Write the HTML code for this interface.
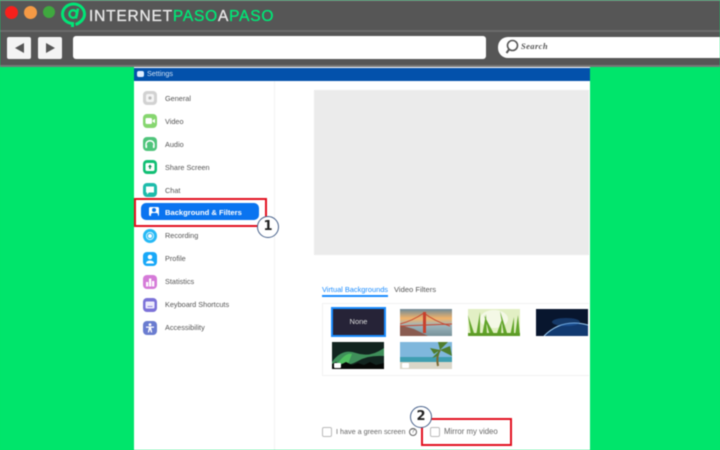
<!DOCTYPE html>
<html><head><meta charset="utf-8">
<style>
html,body{margin:0;padding:0;width:720px;height:450px;overflow:hidden;background:#00e56b;font-family:"Liberation Sans",sans-serif}
#w{position:absolute;left:0;top:0;width:720px;height:450px;overflow:hidden;background:#00e56b;filter:blur(.4px)}
.a{position:absolute}
svg{position:absolute;display:block}
.item{position:absolute;left:165px;font-size:7.3px;line-height:10px;color:#555;white-space:nowrap}
.ic{position:absolute;left:143px;width:14px;height:14px;border-radius:4px}
.ic svg{left:0;top:0}
.th{position:absolute;width:52px;height:27px;overflow:hidden}
</style></head><body><div id="w">
<div class="a" style="left:0;top:0;width:720px;height:66px;background:#565656"></div>
<div class="a" style="left:0;top:0;width:720px;height:1px;background:#888"></div>
<div class="a" style="left:0;top:30px;width:720px;height:2px;background:#6b6b6b"></div>
<div class="a" style="left:0;top:65px;width:720px;height:2px;background:#777"></div>

<div class="a" style="left:5px;top:6px;width:13px;height:13px;border-radius:50%;background:#f8201c"></div>
<div class="a" style="left:24px;top:6px;width:13px;height:13px;border-radius:50%;background:#f59a45"></div>
<div class="a" style="left:43px;top:6px;width:12px;height:12px;border-radius:50%;background:#3fa83f"></div>

<svg style="left:60px;top:2px" width="28" height="26" viewBox="0 0 28 26" fill="none" stroke="#00e676" stroke-width="3">
<path d="M12.5 25 L12.5 21.5 C6.5 21 2.5 17 2.5 12 C2.5 6.5 7.5 2 13.5 2 C19.5 2 24.5 6.5 24.5 12 C24.5 17 20 21 15.5 22.5"/>
<path d="M18 6.5 L15.8 16.5" stroke-width="2.6"/><circle cx="13.2" cy="12" r="3.8" stroke-width="2.4"/>
</svg>
<div class="a" style="left:89px;top:8px;font-size:15.5px;line-height:17px;color:#e6e6e6;white-space:nowrap;letter-spacing:.8px;-webkit-text-stroke:.35px">INTERNET<span style="color:#00e676">PASO</span>A<span style="color:#00e676">PASO</span></div>

<div class="a" style="left:7px;top:37px;width:24px;height:22px;background:#f4f4f4;border-radius:2px"></div>
<div class="a" style="left:38px;top:37px;width:24px;height:22px;background:#f4f4f4;border-radius:2px"></div>
<svg style="left:7px;top:37px" width="55" height="22"><path d="M8 11 L17 6 V16 Z" fill="#555"/><path d="M39 6 L48 11 L39 16 Z" fill="#555"/></svg>
<div class="a" style="left:73px;top:36px;width:413px;height:23px;background:#fff;border-radius:3px"></div>
<div class="a" style="left:498px;top:37px;width:222px;height:21px;background:#fff;border-radius:10px 0 0 10px"></div>
<svg style="left:504px;top:39px" width="16" height="16" fill="none" stroke="#555" stroke-width="1.6"><circle cx="8.5" cy="6.5" r="5"/><path d="M5 10.5 L2.5 14" stroke-width="2"/></svg>
<div class="a" style="left:521px;top:41px;font:italic bold 8.5px/11px 'Liberation Serif',serif;color:#555;letter-spacing:.4px">Search</div>

<div class="a" style="left:134px;top:67px;width:456px;height:383px;background:#fff"></div>
<div class="a" style="left:134px;top:68px;width:456px;height:13px;background:#0351ab"></div>
<div class="a" style="left:137px;top:71px;width:7px;height:6px;background:#dfeeff;border-radius:2px"></div>
<div class="a" style="left:147px;top:69px;font-size:7.2px;line-height:10px;color:#cfe0f4">Settings</div>
<div class="a" style="left:274px;top:81px;width:1px;height:369px;background:#f3f3f3"></div>
<div class="a" style="left:314px;top:90px;width:275px;height:165px;background:#ebebeb"></div>

<div class="ic" style="top:91px;background:#d2d2d2"><svg width="14" height="14"><rect x="3" y="3" width="8" height="8" rx="2" fill="#f4f4f4"/><circle cx="7" cy="7" r="1.6" fill="#bbb"/></svg></div><div class="item" style="top:94px">General</div>
<div class="ic" style="top:114px;background:#86d66f"><svg width="14" height="14"><rect x="2.5" y="4" width="6.5" height="6" rx="1.2" fill="#fff"/><path d="M9.5 6.5 L12 4.8 V9.2 L9.5 7.5Z" fill="#fff"/></svg></div><div class="item" style="top:117px">Video</div>
<div class="ic" style="top:137px;background:#4fc47b"><svg width="14" height="14" fill="none" stroke="#fff" stroke-width="1.4"><path d="M3 10 V7.5 C3 2.5 11 2.5 11 7.5 V10"/><rect x="2.5" y="8" width="1.6" height="3" fill="#fff" stroke="none"/><rect x="9.9" y="8" width="1.6" height="3" fill="#fff" stroke="none"/></svg></div><div class="item" style="top:140px">Audio</div>
<div class="ic" style="top:160px;background:#11bf74"><svg width="14" height="14"><rect x="2.5" y="3" width="9" height="8" rx="1.5" fill="#fff"/><path d="M7 4.5 L9 7 H7.7 V9 H6.3 V7 H5Z" fill="#0f8f58"/></svg></div><div class="item" style="top:163px">Share Screen</div>
<div class="ic" style="top:183px;background:#1dbcab"><svg width="14" height="14"><path d="M3 3.5 H11 V9.5 H6 L4 11.5 V9.5 H3Z" fill="#fff"/></svg></div><div class="item" style="top:186px">Chat</div>

<div class="a" style="left:141px;top:203px;width:118px;height:17px;background:#0a74f0;border-radius:5px"></div>
<div class="a" style="left:149px;top:207px;width:10px;height:9px;background:#fff;border-radius:1.5px"></div>
<div class="a" style="left:152px;top:208px;width:4px;height:4px;background:#0a74f0;border-radius:50%"></div>
<div class="a" style="left:150.5px;top:212.5px;width:7px;height:3px;background:#0a74f0;border-radius:2px 2px 0 0"></div>
<div class="item" style="top:208px;color:#fff;font-weight:bold;font-size:7.6px">Background &amp; Filters</div>
<div class="a" style="left:134px;top:198px;width:133px;height:29px;border:2px solid #e3101f;box-sizing:border-box"></div>

<div class="ic" style="top:229px;background:#27b9f5;border-radius:7px"><svg width="14" height="14" fill="none"><circle cx="7" cy="7" r="3.6" stroke="#d8f3ff" stroke-width="1"/><circle cx="7" cy="7" r="2" fill="#fff"/></svg></div><div class="item" style="top:231px">Recording</div>
<div class="ic" style="top:252px;background:#18a8f8"><svg width="14" height="14"><circle cx="7" cy="5" r="2.3" fill="#fff"/><path d="M3 11.5 C3 7.5 11 7.5 11 11.5Z" fill="#fff"/></svg></div><div class="item" style="top:254px">Profile</div>
<div class="ic" style="top:275px;background:#d57ad8"><svg width="14" height="14" fill="#fff"><rect x="3" y="7" width="2.3" height="4.5"/><rect x="6" y="3.5" width="2.3" height="8"/><rect x="9" y="6" width="2.3" height="5.5"/></svg></div><div class="item" style="top:277px">Statistics</div>
<div class="ic" style="top:298px;background:#7c72d8"><svg width="14" height="14"><rect x="2.5" y="3.5" width="9" height="7" rx="1" fill="#eceafc"/><rect x="4.5" y="8" width="5" height="1" fill="#8f86e0"/></svg></div><div class="item" style="top:300px">Keyboard Shortcuts</div>
<div class="ic" style="top:321px;background:#6a7cd0"><svg width="14" height="14" fill="#fff"><circle cx="7" cy="3.6" r="1.4"/><path d="M3 5.5 H11 V6.7 H8.2 L9.2 11.5 H8 L7 8.5 L6 11.5 H4.8 L5.8 6.7 H3Z"/></svg></div><div class="item" style="top:323px">Accessibility</div>

<div class="a" style="left:257px;top:216px;width:22px;height:22px;border:1.5px solid #46608a;border-radius:50%;background:#fff;box-sizing:border-box;text-align:center;font:bold 13px/19px 'DejaVu Sans',sans-serif;color:#222">1</div>

<div class="a" style="left:322px;top:284px;font-size:7.4px;line-height:11px;color:#1a8cff;white-space:nowrap">Virtual Backgrounds</div>
<div class="a" style="left:322px;top:295px;width:66px;height:2px;background:#1a8cff"></div>
<div class="a" style="left:394px;top:284px;font-size:7.6px;line-height:11px;color:#555;white-space:nowrap">Video Filters</div>
<div class="a" style="left:322px;top:303px;width:267px;height:73px;border:1px solid #f2f2f2;border-right:0;box-sizing:border-box"></div>

<div class="a" style="left:331px;top:307px;width:55px;height:30px;box-sizing:border-box;border:2px solid #1a8cff;background:#262337;color:#ddd;font-size:7.5px;line-height:26px;text-align:center">None</div>

<div class="th" style="left:400px;top:309px"><svg width="52" height="27"><defs><linearGradient id="g1" x1="0" y1="0" x2="0" y2="1"><stop offset="0" stop-color="#6d8a99"/><stop offset=".35" stop-color="#f2b36a"/><stop offset=".6" stop-color="#9db6bd"/><stop offset="1" stop-color="#78929a"/></linearGradient></defs><rect width="52" height="27" fill="url(#g1)"/><path d="M0 16 L14 20 L28 27 H0Z" fill="#8a5b50"/><path d="M0 15 Q12 12 24 4 Q34 12 50 17" stroke="#c8462f" fill="none"/><rect x="23" y="3" width="3" height="21" fill="#c8402c"/><path d="M0 17 L52 15" stroke="#c8462f"/></svg></div>
<div class="th" style="left:468px;top:309px"><svg width="52" height="27"><rect width="52" height="27" fill="#e2efc4"/><ellipse cx="26" cy="10" rx="14" ry="9" fill="#f4f8e6"/><path d="M3 27 L0 6 L7 27 Z M8 27 L12 3 L12 27 Z M14 27 L18 5 L19 27 Z M22 27 L16 6 L27 27 Z M28 27 L34 10 L33 27Z M36 27 L32 2 L40 27 Z M42 27 L46 8 L46 27Z M47 27 L50 6 L52 27Z" fill="#62a52a"/><rect y="24" width="52" height="3" fill="#5d9b26"/></svg></div>
<div class="th" style="left:536px;top:309px"><svg width="52" height="27"><rect width="52" height="27" fill="#08162e"/><path d="M8 27 Q26 9 52 16 V27Z" fill="#123a70"/><path d="M8 27 Q26 9 52 16" stroke="#9fd0f5" fill="none"/><ellipse cx="30" cy="13" rx="14" ry="4" fill="#2a6fc0" opacity=".4"/></svg></div>
<div class="th" style="left:332px;top:342px"><svg width="52" height="27"><rect width="52" height="27" fill="#12241f"/><path d="M0 20 Q10 6 24 11 T52 6 V14 Q36 13 26 19 T0 24Z" fill="#3f8f5a"/><path d="M6 21 Q14 10 20 12 L16 22Z" fill="#4fc060"/><path d="M0 22 L4 20 L8 23 L14 20 L20 23 L26 21 L32 23 L38 20 L44 23 L52 21 V27 H0Z" fill="#060806"/><rect x="2" y="21" width="7" height="5" rx="1" fill="#fff"/></svg></div>
<div class="th" style="left:400px;top:342px"><svg width="52" height="27"><rect width="52" height="18" fill="#7fb7dc"/><rect y="15" width="52" height="5" fill="#3f9eb0"/><rect y="20" width="52" height="7" fill="#d9d6c8"/><path d="M38 24 Q36 14 40 8" stroke="#7a6a35" stroke-width="2" fill="none"/><path d="M40 8 L30 6 L34 12 Z M40 8 L50 4 L52 14 Z M40 8 L38 0 L48 0 Z M40 8 L32 16 L38 14Z" fill="#4f7d2d"/><rect x="2" y="21" width="7" height="5" rx="1" fill="#fff"/></svg></div>

<div class="a" style="left:322px;top:427px;width:10px;height:10px;border:1px solid #bbb;border-radius:2px;box-sizing:border-box"></div>
<div class="a" style="left:336px;top:427px;font-size:7.2px;line-height:10px;color:#666;white-space:nowrap">I have a green screen</div>
<div class="a" style="left:409px;top:428px;width:8px;height:8px;border:1px solid #666;border-radius:50%;box-sizing:border-box;font-size:6px;line-height:7px;text-align:center;color:#555">?</div>
<div class="a" style="left:430px;top:427px;width:10px;height:10px;border:1px solid #bbb;border-radius:2px;box-sizing:border-box"></div>
<div class="a" style="left:444px;top:427px;font-size:7.8px;line-height:10px;color:#666;white-space:nowrap">Mirror my video</div>
<div class="a" style="left:421px;top:418px;width:91px;height:28px;border:2px solid #e3101f;box-sizing:border-box"></div>
<div class="a" style="left:410px;top:406px;width:22px;height:22px;border:1.5px solid #46608a;border-radius:50%;background:#fff;box-sizing:border-box;text-align:center;font:bold 13px/19px 'DejaVu Sans',sans-serif;color:#222">2</div>
</div></body></html>
